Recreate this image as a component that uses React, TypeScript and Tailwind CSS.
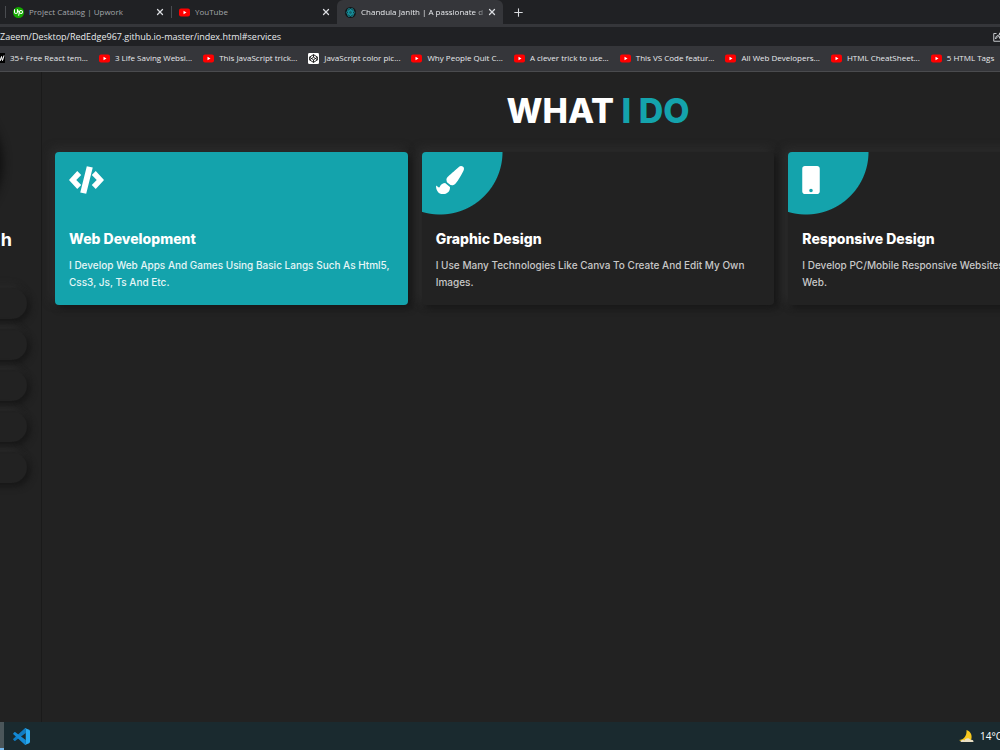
import { useState } from "react";
import { FaMobile, FaPaintBrush } from "react-icons/fa";
import { FiPlus, FiX } from "react-icons/fi";
import { SiUpwork } from "react-icons/si";

interface Tab {
  title: string;
  icon: React.ReactNode;
}

interface ServiceCardProps {
  icon: React.ReactNode;
  title: string;
  text: string;
  active: boolean;
  onEnter: () => void;
}

const YoutubeIcon = () => (
  <svg className="h-[11px] w-[11px] shrink-0" viewBox="0 0 22 22">
    <rect x="0" y="3" width="22" height="16" rx="4" fill="#ff0000" />
    <path d="M9 7.5v7l6-3.5z" fill="#fff" />
  </svg>
);

const UpworkIcon = () => (
  <span className="flex h-[11px] w-[11px] shrink-0 items-center justify-center rounded-full bg-[#14a800] text-white">
    <SiUpwork size={9} />
  </span>
);

const ReactIcon = () => (
  <svg className="h-[11px] w-[11px] shrink-0" viewBox="0 0 24 24" fill="none" stroke="#1793a0" strokeWidth="2">
    <circle cx="12" cy="12" r="12" fill="#101719" stroke="none" />
    <circle cx="12" cy="12" r="6" fill="#14626b" stroke="none" />
    <ellipse cx="12" cy="12" rx="9" ry="4" />
    <ellipse cx="12" cy="12" rx="9" ry="4" transform="rotate(60 12 12)" />
    <ellipse cx="12" cy="12" rx="9" ry="4" transform="rotate(120 12 12)" />
  </svg>
);

const CodepenIcon = () => (
  <svg className="h-[11px] w-[11px] shrink-0" viewBox="0 0 24 24" fill="none" stroke="#111" strokeWidth="2">
    <rect width="24" height="24" rx="3" fill="#fff" stroke="none" />
    <path d="M12 3.5l8.5 5.5v6L12 20.5 3.5 15V9zM12 3.5v5.5M12 15v5.5M3.5 9l8.5 6 8.5-6M3.5 15L12 9l8.5 6" />
  </svg>
);

const ShareIcon = () => (
  <svg className="h-[10px] w-[10px] shrink-0" viewBox="0 0 20 20" fill="none" stroke="#c4c7ca" strokeWidth="2">
    <path d="M7 3H1.500v15.500h16V13M5 14c0-5 3-8 8-8V2l6 5.500-6 5V9c-4 0-6 2-8 5z" />
  </svg>
);

const CodeIcon = () => (
  <svg className="h-7 w-[35px]" viewBox="0 0 106 84" fill="currentColor">
    <path d="M25 15l12 12-15 15 15 15-12 12L0 42z" />
    <path d="M81 15L69 27l15 15-15 15 12 12 25-27z" />
    <path d="M54 0l18 4-20 80-18-4z" />
  </svg>
);

const VscodeIcon = () => (
  <svg className="h-[17px] w-[17px]" viewBox="0 0 100 100">
    <path d="M75 2v28L14 75c-2 2-4 2-6 0l-6-6c-2-2-2-4 0-6L70 2z" fill="#0f7cc4" />
    <path d="M75 98V70L14 25c-2-2-4-2-6 0l-6 6c-2 2-2 4 0 6l68 61z" fill="#1489d4" />
    <path d="M70 0l25 11c3 2 5 4 5 8v62c0 4-2 6-5 8l-25 11 5-8V8z" fill="#27a9f1" />
  </svg>
);

const MoonIcon = () => (
  <svg className="h-[16px] w-[16px]" viewBox="0 0 32 32">
    <path d="M17 4c10 3 12 13 9 20-4 5-16 5-24 0 10 0 16-9 15-20z" fill="#f7c81e" />
    <path d="M5 28c1-4 5-5 8-3 2-6 10-6 12-1 4-1 6 1 6 4z" fill="#eadfc4" />
  </svg>
);

const tabs: Tab[] = [
  { title: "Project Catalog | Upwork", icon: <UpworkIcon /> },
  { title: "YouTube", icon: <YoutubeIcon /> },
  { title: "Chandula Janith | A passionate d", icon: <ReactIcon /> },
];

const bookmarks = [
  "3 Life Saving Websi...",
  "This JavaScript trick...",
  "JavaScript color pic...",
  "Why People Quit C...",
  "A clever trick to use...",
  "This VS Code featur...",
  "All Web Developers...",
  "HTML CheatSheet...",
  "5 HTML Tags",
];

const services = [
  {
    icon: <CodeIcon />,
    title: "Web Development",
    text: "I Develop Web Apps And Games Using Basic Langs Such As Html5, Css3, Js, Ts And Etc.",
  },
  {
    icon: <FaPaintBrush size={28} />,
    title: "Graphic Design",
    text: "I Use Many Technologies Like Canva To Create And Edit My Own Images.",
  },
  {
    icon: <FaMobile size={28} className="w-[18px]" />,
    title: "Responsive Design",
    text: "I Develop PC/Mobile Responsive Websites\nWeb.",
  },
];

const Browser = () => {
  const [activeTab, setActiveTab] = useState(2);
  const [url, setUrl] = useState("Zaeem/Desktop/RedEdge967.github.io-master/index.html#services");

  return (
    <header className="bg-[#202124] font-['Open_Sans',sans-serif] text-[8px] text-[#e8eaed]">
      <div className="flex h-6 pl-[5px]">
        {tabs.map((tab, index) => (
          <div
            key={tab.title}
            className={`flex w-[166px] items-center pr-[6px] ${
              activeTab === index ? "rounded-t-md bg-[#35363a]" : "text-[#a3a7ab]"
            }`}
          >
            <span className={`h-3 w-px ${activeTab === index ? "" : "bg-[#4a4c50]"}`}></span>
            <button
              className="ml-[7px] flex min-w-0 flex-1 items-center gap-[5px] text-left"
              onClick={() => setActiveTab(index)}
            >
              {tab.icon}
              <span
                className={`flex-1 overflow-hidden whitespace-nowrap ${
                  activeTab === index ? "[mask-image:linear-gradient(to_right,#000_90%,transparent)]" : ""
                }`}
              >
                {tab.title}
              </span>
            </button>
            <button aria-label="Close tab" className="text-[#dadce0]">
              <FiX size={10} strokeWidth={3} />
            </button>
          </div>
        ))}
        <button aria-label="New tab" className="ml-[9px] text-[#dadce0]">
          <FiPlus size={13} />
        </button>
      </div>
      <div className="flex h-[22px] items-center border-t-[3px] border-[#35363a] text-[9px]">
        <input
          aria-label="Address"
          className="h-full min-w-0 flex-1 bg-transparent outline-none"
          value={url}
          onChange={(e) => setUrl(e.target.value)}
        />
        <button aria-label="Share" className="-mr-[3px]">
          <ShareIcon />
        </button>
      </div>
      <nav className="flex h-[26px] items-center gap-[11px] overflow-hidden border-b border-[#4a4b4e] bg-[#35363a] pb-px whitespace-nowrap">
        <a href="#" className="flex items-center gap-[5px]">
          <svg className="h-[10px] w-[5px]" viewBox="0 0 10 20" fill="none" stroke="#fff" strokeWidth="2">
            <rect width="10" height="20" fill="#000" stroke="none" />
            <path d="M-2 5l3 10 2-8 2 8 3-10" />
          </svg>
          35+ Free React tem...
        </a>
        {bookmarks.map((name) => (
          <a key={name} href="#" className="flex items-center gap-[5px]">
            {name.startsWith("JavaScript") ? <CodepenIcon /> : <YoutubeIcon />}
            {name}
          </a>
        ))}
      </nav>
    </header>
  );
};

const Sidebar = () => (
  <aside className="flex w-[42px] shrink-0 flex-col items-end overflow-hidden border-r border-[#1a1a1a] pt-5 pr-[14px]">
    <div className="mr-[27px] h-[136px] w-[136px] shrink-0 rounded-full shadow-[3px_3px_8px_#111111]"></div>
    <h2 className="mr-[15px] text-[18px] leading-6 font-bold text-white">h</h2>
    <nav className="mt-9 flex flex-col gap-[10px]">
      {["Home", "About", "Services", "Work", "Contact"].map((name) => (
        <a
          key={name}
          href="#services"
          aria-label={name}
          className="h-[31px] w-[120px] rounded-full shadow-[3px_3px_7px_#161616,-3px_-3px_7px_#2b2b2b]"
        ></a>
      ))}
    </nav>
  </aside>
);

const ServiceCard = ({ icon, title, text, active, onEnter }: ServiceCardProps) => (
  <article
    onMouseEnter={onEnter}
    className={`rounded-[4px] p-[14px] shadow-[3px_3px_7px_#161616,-3px_-3px_10px_#303030] ${
      active
        ? "bg-[#14a3ac] text-[#e6f6f7]"
        : "bg-[#222222] bg-[radial-gradient(circle_at_18px_0px,#14a3ac_62px,transparent_63px)] text-[#c8c8c8]"
    }`}
  >
    <div className="h-7 text-white">{icon}</div>
    <h3 className="mt-[35px] text-[14px] leading-5 font-extrabold text-white">{title}</h3>
    <p className="mt-2 text-[10px] leading-[17px] font-medium whitespace-pre-line">{text}</p>
  </article>
);

const App: React.FC = () => {
  const [hovered, setHovered] = useState(0);

  return (
    <div className="flex min-h-screen flex-col overflow-hidden bg-[#222222] font-['Inter',sans-serif]">
      <Browser />
      <div className="flex flex-1">
        <Sidebar />
        <main className="min-w-[1112px] flex-1 px-[13px] pt-[19px]">
          <h1 className="mb-[21px] text-center text-[34px] leading-10 font-extrabold text-white">
            WHAT <span className="text-[#14a3ac]">I DO</span>
          </h1>
          <section id="services" className="grid grid-cols-3 gap-[14px]">
            {services.map((service, index) => (
              <ServiceCard
                key={service.title}
                {...service}
                active={hovered === index}
                onEnter={() => setHovered(index)}
              />
            ))}
          </section>
        </main>
      </div>
      <footer className="flex h-7 items-center justify-between overflow-hidden bg-[#1a2a2f] font-['Open_Sans',sans-serif] text-[10px] text-white">
        <div className="flex h-full items-center gap-[9px]">
          <span className="h-full w-1 border-b-2 border-[#76b9ed] bg-[#4b565a]"></span>
          <button aria-label="Visual Studio Code">
            <VscodeIcon />
          </button>
        </div>
        <div className="-mr-[2px] flex items-center gap-[6px]">
          <MoonIcon />
          <span>14°C</span>
        </div>
      </footer>
    </div>
  );
};

export default App;
